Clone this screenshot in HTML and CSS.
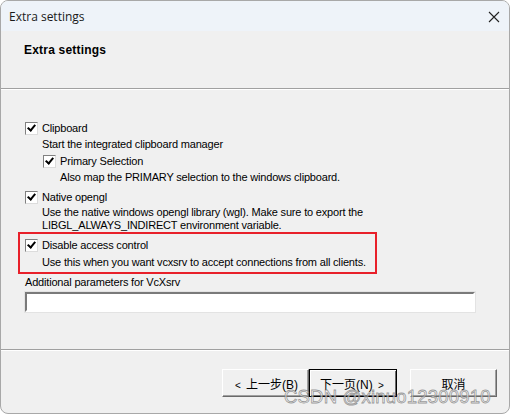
FILE: index.html
```html
<!DOCTYPE html>
<html lang="zh">
<head>
  <meta charset="UTF-8" />
  <title>Extra settings</title>
  <link rel="stylesheet" href="styles.css">
</head>
<body>
  <div class="window">
    <div class="titlebar">
      <span class="title">Extra settings</span>
      <svg class="close" width="12" height="12" viewBox="0 0 12 12">
        <path d="M1 1 L11 11 M11 1 L1 11" stroke="#222" stroke-width="1.1" fill="none" />
      </svg>
    </div>

    <div class="banner">
      <div class="banner-title">Extra settings</div>
    </div>

    <div class="content">
      <div class="opt opt-clip">
        <div class="check-row"><span class="box on"></span>Clipboard</div>
        <div class="desc">Start the integrated clipboard manager</div>
        <div class="sub">
          <div class="check-row"><span class="box on"></span>Primary Selection</div>
          <div class="desc">Also map the PRIMARY selection to the windows clipboard.</div>
        </div>
      </div>

      <div class="opt opt-gl">
        <div class="check-row"><span class="box on"></span>Native opengl</div>
        <div class="desc">Use the native windows opengl library (wgl). Make sure to export the</div>
        <div class="desc">LIBGL_ALWAYS_INDIRECT environment variable.</div>
      </div>

      <!-- 赤枠で強調 -->
      <div class="opt highlight">
        <div class="check-row"><span class="box on"></span>Disable access control</div>
        <div class="desc desc-gap">Use this when you want vcxsrv to accept connections from all clients.</div>
      </div>

      <div class="params">
        <div class="params-label">Additional parameters for VcXsrv</div>
        <input type="text" class="params-input" />
      </div>
    </div>

    <div class="footer">
      <button class="btn btn-prev"><span class="arrow">&lt;</span> 上一步(B)</button>
      <button class="btn btn-default">下一页(N) <span class="arrow">&gt;</span></button>
      <button class="btn btn-cancel">取消</button>
      <span class="watermark">CSDN @xinuo12300910</span>
    </div>
  </div>
</body>
</html>
```

FILE: styles.css
```css
body {
  margin: 0;
  background: #fff;
  font-family: "Liberation Sans", Arial, sans-serif;
  font-size: 11px;
  color: #000;
}

.window {
  width: 508px;
  height: 412px;
  border: 1px solid #a8a8a8;
  border-radius: 8px;
  background: #f0f0f0;
  overflow: hidden;
  position: relative;
}

/* タイトルバー */
.titlebar {
  height: 30px;
  background: #eef3f9;
  display: flex;
  align-items: center;
  justify-content: space-between;
  padding: 0 9px 0 8px;
}
.title {
  font-family: "Open Sans", "Noto Sans", sans-serif;
  font-size: 12px;
  color: #1a1a1a;
}
.close {
  margin-top: 1px;
}

/* ヘッダー */
.banner {
  height: 57px;
  border-bottom: 1px solid #a0a0a0;
  box-shadow: 0 1px 0 #fff;
}
.banner-title {
  font-weight: bold;
  font-size: 12px;
  padding: 12px 0 0 23px;
  letter-spacing: 0.2px;
}

/* 設定項目 */
.content {
  height: 261px;
  padding: 33px 0 0 24px;
  border-bottom: 1px solid #a0a0a0;
  box-shadow: 0 1px 0 #fff;
  box-sizing: border-box;
  letter-spacing: -0.18px;
  white-space: nowrap;
}
.check-row {
  display: flex;
  align-items: center;
  height: 13px;
  line-height: 13px;
}
.box {
  width: 11px;
  height: 11px;
  border: 1px solid #808080;
  border-right-color: #dcdcdc;
  border-bottom-color: #dcdcdc;
  background: #fff;
  margin-right: 4px;
  position: relative;
  flex-shrink: 0;
}
.box.on::after {
  content: "";
  position: absolute;
  left: 3px;
  top: 0px;
  width: 3px;
  height: 6px;
  border: solid #000;
  border-width: 0 2px 2px 0;
  transform: rotate(40deg);
}
.desc {
  line-height: 13px;
  padding-left: 17px;
}
.opt-clip .check-row + .desc {
  margin-top: 3px;
}
.sub {
  margin: 4px 0 0 18px;
}
.sub .desc {
  margin-top: 2px;
}
.opt-gl {
  margin-top: 7px;
}
.opt-gl .check-row + .desc {
  margin-top: 2px;
}
.highlight {
  width: 350px;
  margin: 0 0 0 -7px;
  padding: 5px 0 3px 5px;
  border: 2px solid #e8202a;
}
.desc-gap {
  margin-top: 4px;
}
.params {
  margin-top: 2px;
}
.params-label {
  line-height: 13px;
}
.params-input {
  display: block;
  box-sizing: border-box;
  width: 450px;
  height: 20px;
  margin-top: 3px;
  border: 2px solid #fff;
  border-top-color: #7a7a7a;
  border-left-color: #7a7a7a;
  outline: 1px solid #e3e3e3;
  background: #fff;
}

/* ボタン */
.footer {
  display: flex;
  padding: 19px 0 0 221px;
  position: relative;
}
.btn {
  width: 87px;
  height: 28px;
  font-family: "Liberation Sans", "Noto Sans CJK SC", sans-serif;
  font-size: 12px;
  background: #f0f0f0;
  border: 1px solid #fff;
  border-right-color: #696969;
  border-bottom-color: #696969;
  box-shadow: inset -1px -1px 0 #a0a0a0;
  padding: 0;
  color: #000;
}
.arrow {
  font-size: 10px;
  margin: 0 2px;
}
.btn-default {
  width: 88px;
  border: 1px solid #000;
  box-shadow: inset 1px 1px 0 #fff, inset -1px -1px 0 #696969;
}
.btn-cancel {
  margin-left: 13px;
}
.watermark {
  position: absolute;
  left: 283px;
  top: 36px;
  font-family: "Liberation Sans", sans-serif;
  font-size: 18.5px;
  color: rgba(255, 255, 255, 0.6);
  -webkit-text-stroke: 0.8px rgba(110, 110, 110, 0.7);
  letter-spacing: 0.2px;
}
```
